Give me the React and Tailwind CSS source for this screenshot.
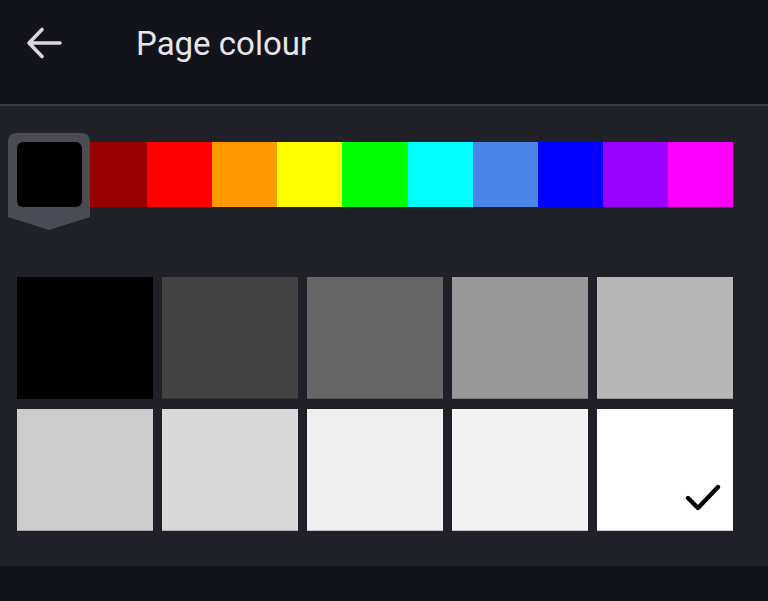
import React from "react";

const hues = [
  "#000000",
  "#980000",
  "#ff0000",
  "#ff9900",
  "#ffff00",
  "#00ff00",
  "#00ffff",
  "#4a86e8",
  "#0000ff",
  "#9900ff",
  "#ff00ff",
];

const greys = [
  "#000000",
  "#434343",
  "#666666",
  "#999999",
  "#b7b7b7",
  "#cccccc",
  "#d9d9d9",
  "#efefef",
  "#f3f3f3",
  "#ffffff",
];

export default function App() {
  return (
    <div
      className="w-[768px] h-[601px] bg-[#13141b] flex flex-col overflow-hidden"
      style={{ fontFamily: "Roboto, 'Noto Sans', sans-serif" }}
    >
      <header className="h-[104px] flex items-center pb-[18px] shrink-0">
        <div className="w-[136px] flex pl-[25px]">
          <svg width="37" height="34" viewBox="0 0 37 34" fill="none">
            <path
              d="M35 17H4M17 3.5L4 17L17 30.5"
              stroke="#d8d8de"
              strokeWidth="3.6"
              strokeLinecap="round"
              strokeLinejoin="round"
            />
          </svg>
        </div>
        <h1 className="text-[33px] text-[#e6e6ea] leading-none">Page colour</h1>
      </header>
      <div className="h-[2px] bg-[#3a3b43] shrink-0" />
      <main className="bg-[#1f2028] pl-[17px] pr-[35px] pt-[36px] pb-[35px] shrink-0">
        <div className="flex h-[65px]">
          {hues.map((c, i) =>
            i === 0 ? (
              <div key={c} className="relative flex-1 z-10">
                <svg
                  className="absolute left-[-9px] top-[-9px]"
                  width="82"
                  height="97"
                  viewBox="0 0 82 97"
                >
                  <path
                    d="M9 0H73Q82 0 82 9V84L41 97L0 84V9Q0 0 9 0Z"
                    fill="#4a4b55"
                  />
                </svg>
                <div className="relative h-full rounded-[6px] bg-black" />
              </div>
            ) : (
              <div key={c} className="flex-1" style={{ backgroundColor: c }} />
            )
          )}
        </div>
        <div className="mt-[70px] grid grid-cols-5 gap-x-[9px] gap-y-[10px]">
          {greys.map((c, i) => (
            <div
              key={c}
              className="relative h-[122px] border-b border-black/20"
              style={{ backgroundColor: c }}
            >
              {i === 9 && (
                <svg
                  className="absolute right-[12px] bottom-[18px]"
                  width="36"
                  height="28"
                  viewBox="0 0 36 28"
                  fill="none"
                >
                  <path
                    d="M3 14L13 24L33 3"
                    stroke="#000"
                    strokeWidth="4.4"
                    strokeLinecap="round"
                    strokeLinejoin="round"
                  />
                </svg>
              )}
            </div>
          ))}
        </div>
      </main>
      <div className="flex-1 bg-[#13141b]" />
    </div>
  );
}
